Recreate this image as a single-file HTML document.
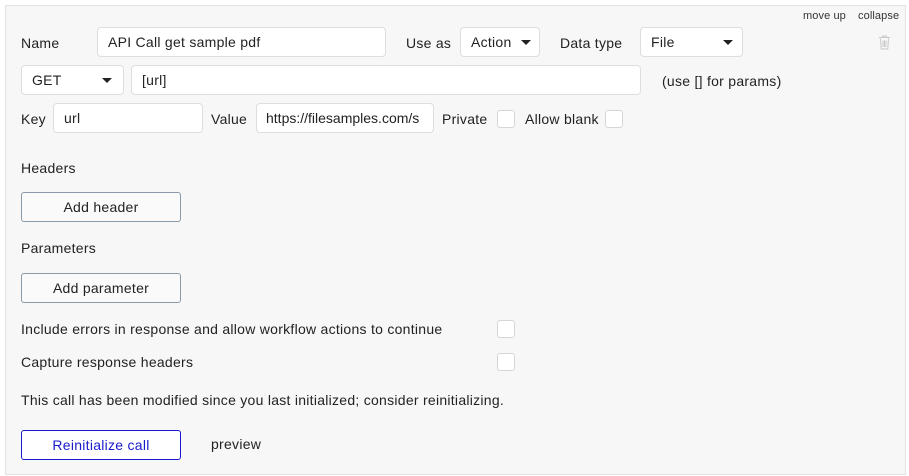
<!DOCTYPE html>
<html><head><style>
*{box-sizing:border-box;margin:0;padding:0}
body{width:909px;height:476px;background:#fff;font-family:"Liberation Sans",sans-serif;font-size:14px;letter-spacing:0.27px;color:#222;position:relative;overflow:hidden}
.panel{position:absolute;left:5px;top:5px;width:901px;height:470px;background:#f7f7f7;border:1px solid #e2e2e2}
.a{position:absolute;white-space:nowrap;line-height:18px}
.in{position:absolute;background:#fff;border:1px solid #dedede;border-radius:4px;height:30px;padding-left:10px;line-height:28px;white-space:nowrap;overflow:hidden}
.car{position:absolute;width:0;height:0;border-left:5px solid transparent;border-right:5px solid transparent;border-top:5px solid #222;top:12px}
.cb{position:absolute;width:18px;height:18px;background:#fff;border:1px solid #d6d6d6;border-radius:3px}
.btn{position:absolute;left:21px;width:160px;height:30px;border:1px solid #8a9aa8;border-radius:3px;background:#fafafa;text-align:center;line-height:28px}
.sm{font-size:11px;color:#333;letter-spacing:0.1px}
</style></head><body>
<div class="panel"></div>
<div class="a sm" style="left:803px;top:7px">move up</div>
<div class="a sm" style="left:858px;top:7px">collapse</div>
<svg style="position:absolute;left:878px;top:35px" width="13" height="15" viewBox="0 0 13 15"><g fill="none" stroke="#c8c8c8" stroke-width="1"><path d="M1 2.5h11M4.5 2.5V1h4v1.5M2.5 3.5l.7 10.5h6.6l.7-10.5"/><path d="M5 5.5v6.5M6.5 5.5v6.5M8 5.5v6.5"/></g></svg>
<div class="a" style="left:21px;top:34px">Name</div>
<div class="in" style="left:97px;top:27px;width:289px">API Call get sample pdf</div>
<div class="a" style="left:406px;top:34px">Use as</div>
<div class="in" style="left:460px;top:27px;width:80px">Action<span class="car" style="left:60px"></span></div>
<div class="a" style="left:560px;top:34px">Data type</div>
<div class="in" style="left:640px;top:27px;width:103px">File<span class="car" style="left:82px"></span></div>
<div class="in" style="left:21px;top:65px;width:103px">GET<span class="car" style="left:80px"></span></div>
<div class="in" style="left:131px;top:65px;width:510px">[url]</div>
<div class="a" style="left:662px;top:72px">(use [] for params)</div>
<div class="a" style="left:21px;top:110px">Key</div>
<div class="in" style="left:53px;top:103px;width:150px">url</div>
<div class="a" style="left:211px;top:110px">Value</div>
<div class="in" style="left:256px;top:103px;width:178px;padding-left:9px;letter-spacing:0">https://filesamples.com/s</div>
<div class="a" style="left:442px;top:110px">Private</div>
<div class="cb" style="left:497px;top:110px"></div>
<div class="a" style="left:525px;top:110px">Allow blank</div>
<div class="cb" style="left:605px;top:110px"></div>
<div class="a" style="left:21px;top:159px">Headers</div>
<div class="btn" style="top:192px">Add header</div>
<div class="a" style="left:21px;top:239px">Parameters</div>
<div class="btn" style="top:273px">Add parameter</div>
<div class="a" style="left:21px;top:320px">Include errors in response and allow workflow actions to continue</div>
<div class="cb" style="left:497px;top:320px"></div>
<div class="a" style="left:21px;top:353px">Capture response headers</div>
<div class="cb" style="left:497px;top:353px"></div>
<div class="a" style="left:21px;top:391px">This call has been modified since you last initialized; consider reinitializing.</div>
<div class="btn" style="top:430px;border-color:#1a1acc;color:#1a1acc;background:#fff">Reinitialize call</div>
<div class="a" style="left:211px;top:435px">preview</div>
</body></html>
